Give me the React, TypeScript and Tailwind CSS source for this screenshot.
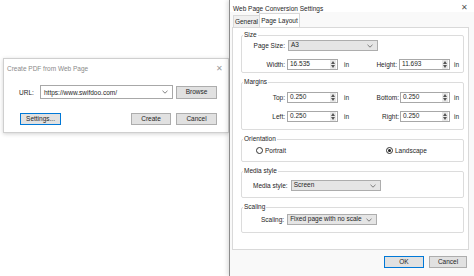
const font = "font-['Liberation_Sans','Noto_Sans',sans-serif]";

function Chevron() {
  return (
    <svg width="6" height="4" viewBox="0 0 6 4" className="shrink-0">
      <path d="M0.5 0.8 L3 3.2 L5.5 0.8" fill="none" stroke="#606060" strokeWidth="0.8" />
    </svg>
  );
}

function Select({ value, width }: { value: string; width: string }) {
  return (
    <div
      className={`flex h-[11px] items-center justify-between whitespace-nowrap border border-[#adadad] bg-[#e5e5e5] pl-[2px] pr-[4px] ${width}`}
    >
      <span className="leading-none">{value}</span>
      <Chevron />
    </div>
  );
}

function Spin({ value, width }: { value: string; width: string }) {
  return (
    <div className={`flex h-[11px] items-center justify-between border border-[#a8a8a8] bg-white pl-[2px] pr-[1px] ${width}`}>
      <span className="leading-none">{value}</span>
      <div className="flex h-[9px] w-[6px] flex-col items-center justify-center gap-[1px] bg-[#e8e8e8]">
        <svg width="4" height="3" viewBox="0 0 4 3">
          <path d="M0 3 L2 0 L4 3 Z" fill="#555" />
        </svg>
        <svg width="4" height="3" viewBox="0 0 4 3">
          <path d="M0 0 L2 3 L4 0 Z" fill="#555" />
        </svg>
      </div>
    </div>
  );
}

function Btn({ label, focused, width }: { label: string; focused?: boolean; width: string }) {
  return (
    <div
      className={`flex h-[12px] items-center justify-center border bg-[#e1e1e1] leading-none ${width} ${
        focused ? 'border-[#0078d7]' : 'border-[#adadad]'
      }`}
    >
      {label}
    </div>
  );
}

function Group({ title, className, pad, children }: { title: string; className: string; pad: string; children: React.ReactNode }) {
  return (
    <fieldset className={`rounded-[2px] border border-[#dcdcdc] bg-white ${className}`}>
      <legend className="ml-[1px] px-[1px] leading-[8px]">{title}</legend>
      <div className={pad}>{children}</div>
    </fieldset>
  );
}

function PairRow({
  left,
  leftVal,
  right,
  rightVal,
  className,
}: {
  left: string;
  leftVal: string;
  right: string;
  rightVal: string;
  className: string;
}) {
  return (
    <div className={`flex items-center ${className}`}>
      <span className="w-[42px] text-right">{left}</span>
      <div className="ml-[2px]">
        <Spin value={leftVal} width="w-[51px]" />
      </div>
      <span className="ml-[6px] w-[8px]">in</span>
      <span className="w-[47px] text-right">{right}</span>
      <div className="ml-[1px]">
        <Spin value={rightVal} width="w-[50px]" />
      </div>
      <span className="ml-[4px]">in</span>
    </div>
  );
}

function Radio({ checked, label }: { checked?: boolean; label: string }) {
  return (
    <div className="flex items-center gap-[2px]">
      <div className="flex h-[7px] w-[7px] items-center justify-center rounded-full border border-[#333] bg-white">
        {checked && <div className="h-[3px] w-[3px] rounded-full bg-[#222]" />}
      </div>
      <span>{label}</span>
    </div>
  );
}

function CreateDialog() {
  return (
    <div className="flex h-[75px] w-[226px] flex-col border border-[#cfcfcf] bg-white shadow-[0_1px_4px_rgba(0,0,0,0.18)]">
      <div className="flex h-[19px] items-center justify-between pl-[3px] pr-[5px] text-[#8a8a8a]">
        <span>Create PDF from Web Page</span>
        <span className="text-[8px] text-[#9a9a9a]">✕</span>
      </div>
      <div className="mt-[7px] flex items-center pl-[15px]">
        <span className="w-[21px]">URL:</span>
        <div className="flex h-[14px] w-[133px] items-center justify-between border border-[#a8a8a8] bg-white pl-[3px] pr-[4px]">
          <span>https://www.swifdoo.com/</span>
          <Chevron />
        </div>
        <div className="ml-[3px]">
          <Btn label="Browse" width="w-[41px] h-[13px]" />
        </div>
      </div>
      <div className="mt-[14px] flex items-center pl-[16px]">
        <Btn label="Settings..." focused width="w-[41px]" />
        <div className="ml-[70px]">
          <Btn label="Create" width="w-[40px]" />
        </div>
        <div className="ml-[5px]">
          <Btn label="Cancel" width="w-[41px]" />
        </div>
      </div>
    </div>
  );
}

function SettingsDialog() {
  return (
    <div className="flex h-[276px] w-[245px] shrink-0 flex-col border-l border-[#8c8c8c] bg-[#f9f9f9] shadow-[-2px_0_4px_rgba(0,0,0,0.12)]">
      <div className="flex h-[12px] items-end justify-between bg-white pl-[3px] pr-[6px]">
        <span className="leading-none">Web Page Conversion Settings</span>
        <span className="text-[8px] leading-none text-[#555]">✕</span>
      </div>
      <div className="flex h-[15px] items-end whitespace-nowrap pl-[3px]">
        <div className="flex h-[12px] w-[26px] items-center justify-center border border-b-0 border-r-0 border-[#d9d9d9] bg-[#f0f0f0]">
          General
        </div>
        <div className="flex h-[14px] w-[41px] items-center justify-center border border-b-0 border-[#d9d9d9] bg-white">
          Page Layout
        </div>
      </div>
      <div className="ml-[2px] flex h-[223px] w-[237px] flex-col gap-[5px] border border-[#d9d9d9] bg-white pl-[8px] pr-[4px] pt-[3px]">
        <Group title="Size" className="h-[42px]" pad="pl-[1px]">
          <div className="mt-[1px] flex items-center">
            <span className="w-[42px] text-right">Page Size:</span>
            <div className="ml-[3px]">
              <Select value="A3" width="w-[90px]" />
            </div>
          </div>
          <div className="mt-[8px] flex items-center">
            <span className="w-[42px] text-right">Width:</span>
            <div className="ml-[2px]">
              <Spin value="16.535" width="w-[51px]" />
            </div>
            <span className="ml-[6px] w-[8px]">in</span>
            <span className="w-[45px] text-right">Height:</span>
            <div className="ml-[2px]">
              <Spin value="11.693" width="w-[51px]" />
            </div>
            <span className="ml-[4px]">in</span>
          </div>
        </Group>
        <Group title="Margins" className="h-[52px]" pad="pl-[1px]">
          <PairRow left="Top:" leftVal="0.250" right="Bottom:" rightVal="0.250" className="mt-[6px]" />
          <PairRow left="Left:" leftVal="0.250" right="Right:" rightVal="0.250" className="mt-[8px]" />
        </Group>
        <Group title="Orientation" className="h-[27px]" pad="pl-[14px]">
          <div className="mt-[3px] flex items-center">
            <div className="w-[130px]">
              <Radio label="Portrait" />
            </div>
            <Radio checked label="Landscape" />
          </div>
        </Group>
        <Group title="Media style" className="h-[31px]" pad="pl-[11px]">
          <div className="mt-[5px] flex items-center">
            <span>Media style:</span>
            <div className="ml-[3px]">
              <Select value="Screen" width="w-[90px]" />
            </div>
          </div>
        </Group>
        <Group title="Scaling" className="h-[30px]" pad="pl-[19px]">
          <div className="mt-[3px] flex items-center">
            <span>Scaling:</span>
            <div className="ml-[3px]">
              <Select value="Fixed page with no scale" width="w-[90px]" />
            </div>
          </div>
        </Group>
      </div>
      <div className="mt-[6px] flex justify-end gap-[5px] pr-[7px]">
        <Btn label="OK" focused width="w-[40px]" />
        <Btn label="Cancel" width="w-[38px]" />
      </div>
    </div>
  );
}

export default function App() {
  return (
    <div className={`flex h-[276px] w-[474px] overflow-hidden bg-white text-[6.5px] leading-[9px] text-[#1e1e1e] ${font}`}>
      <div className="w-[229px] shrink-0 pl-[3px] pt-[58px]">
        <CreateDialog />
      </div>
      <SettingsDialog />
    </div>
  );
}
